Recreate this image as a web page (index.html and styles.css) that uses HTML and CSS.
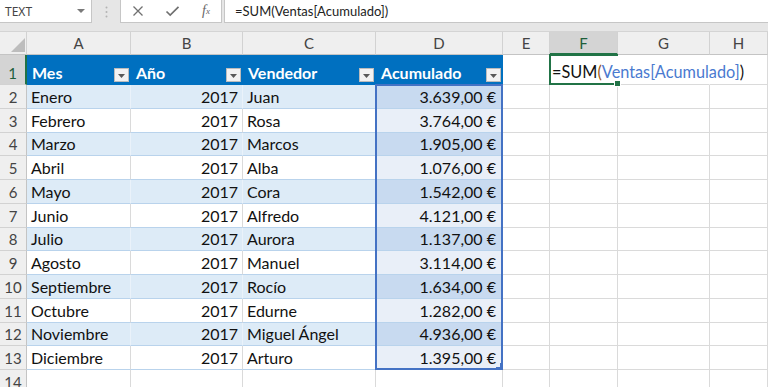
FILE: index.html
```html
<!DOCTYPE html>
<html lang="es">
<head>
    <meta charset="UTF-8">
    <meta name="viewport" content="width=device-width, initial-scale=1.0">
    <title>Ventas - Excel</title>
    <link rel="stylesheet" href="styles.css">
</head>
<body>
    <div class="formula-bar">
        <div class="name-box">
            <span>TEXT</span>
            <svg width="8" height="4" viewBox="0 0 8 4"><polygon points="0,0 8,0 4,4" fill="#7a7a7a"/></svg>
        </div>
        <div class="grip">
            <svg width="3" height="12" viewBox="0 0 3 12"><circle cx="1.5" cy="1.5" r="1" fill="#b3b3b3"/><circle cx="1.5" cy="6" r="1" fill="#b3b3b3"/><circle cx="1.5" cy="10.5" r="1" fill="#b3b3b3"/></svg>
        </div>
        <div class="fx-buttons">
            <span class="fx-btn"><svg width="12" height="12" viewBox="0 0 12 12"><path d="M1.5 1.5 L10.5 10.5 M10.5 1.5 L1.5 10.5" stroke="#707070" stroke-width="1.3" fill="none"/></svg></span>
            <span class="fx-btn"><svg width="15" height="12" viewBox="0 0 15 12"><path d="M1.5 6.5 L5.2 10 L13.5 1.8" stroke="#707070" stroke-width="1.7" fill="none"/></svg></span>
            <span class="fx-btn fx"><i>f</i><sub>x</sub></span>
        </div>
        <div class="formula-input">=SUM(Ventas[Acumulado])</div>
    </div>

    <div class="sheet">
        <!-- column headers -->
        <div class="corner"><svg width="27" height="23" viewBox="0 0 27 23"><polygon points="25,6 25,20 11,20" fill="#bdbdbd"/></svg></div>
        <div class="ch">A</div>
        <div class="ch">B</div>
        <div class="ch">C</div>
        <div class="ch">D</div>
        <div class="ch">E</div>
        <div class="ch ch-active">F</div>
        <div class="ch">G</div>
        <div class="ch">H</div>

        <!-- row 1: table header -->
        <div class="rh rh-active">1</div>
        <div class="c th"><span>Mes</span><span class="filter"><svg width="7" height="4" viewBox="0 0 7 4"><polygon points="0,0 7,0 3.5,4" fill="#595959"/></svg></span></div>
        <div class="c th"><span>Año</span><span class="filter"><svg width="7" height="4" viewBox="0 0 7 4"><polygon points="0,0 7,0 3.5,4" fill="#595959"/></svg></span></div>
        <div class="c th"><span>Vendedor</span><span class="filter"><svg width="7" height="4" viewBox="0 0 7 4"><polygon points="0,0 7,0 3.5,4" fill="#595959"/></svg></span></div>
        <div class="c th"><span>Acumulado</span><span class="filter"><svg width="7" height="4" viewBox="0 0 7 4"><polygon points="0,0 7,0 3.5,4" fill="#595959"/></svg></span></div>
        <div class="c"></div>
        <div class="c active-cell"><span>=SUM<span class="paren">(</span><span class="ref">Ventas[Acumulado]</span>)</span><span class="caret"></span></div>
        <div class="c no-right"></div>
        <div class="c"></div>

        <!-- data rows -->
        <div class="rh">2</div>
        <div class="c t band">Enero</div><div class="c t band num">2017</div><div class="c t band">Juan</div><div class="c t band num sel">3.639,00 €</div>
        <div class="c"></div><div class="c"></div><div class="c"></div><div class="c"></div>

        <div class="rh">3</div>
        <div class="c t">Febrero</div><div class="c t num">2017</div><div class="c t">Rosa</div><div class="c t num sel">3.764,00 €</div>
        <div class="c"></div><div class="c"></div><div class="c"></div><div class="c"></div>

        <div class="rh">4</div>
        <div class="c t band">Marzo</div><div class="c t band num">2017</div><div class="c t band">Marcos</div><div class="c t band num sel">1.905,00 €</div>
        <div class="c"></div><div class="c"></div><div class="c"></div><div class="c"></div>

        <div class="rh">5</div>
        <div class="c t">Abril</div><div class="c t num">2017</div><div class="c t">Alba</div><div class="c t num sel">1.076,00 €</div>
        <div class="c"></div><div class="c"></div><div class="c"></div><div class="c"></div>

        <div class="rh">6</div>
        <div class="c t band">Mayo</div><div class="c t band num">2017</div><div class="c t band">Cora</div><div class="c t band num sel">1.542,00 €</div>
        <div class="c"></div><div class="c"></div><div class="c"></div><div class="c"></div>

        <div class="rh">7</div>
        <div class="c t">Junio</div><div class="c t num">2017</div><div class="c t">Alfredo</div><div class="c t num sel">4.121,00 €</div>
        <div class="c"></div><div class="c"></div><div class="c"></div><div class="c"></div>

        <div class="rh">8</div>
        <div class="c t band">Julio</div><div class="c t band num">2017</div><div class="c t band">Aurora</div><div class="c t band num sel">1.137,00 €</div>
        <div class="c"></div><div class="c"></div><div class="c"></div><div class="c"></div>

        <div class="rh">9</div>
        <div class="c t">Agosto</div><div class="c t num">2017</div><div class="c t">Manuel</div><div class="c t num sel">3.114,00 €</div>
        <div class="c"></div><div class="c"></div><div class="c"></div><div class="c"></div>

        <div class="rh">10</div>
        <div class="c t band">Septiembre</div><div class="c t band num">2017</div><div class="c t band">Rocío</div><div class="c t band num sel">1.634,00 €</div>
        <div class="c"></div><div class="c"></div><div class="c"></div><div class="c"></div>

        <div class="rh">11</div>
        <div class="c t">Octubre</div><div class="c t num">2017</div><div class="c t">Edurne</div><div class="c t num sel">1.282,00 €</div>
        <div class="c"></div><div class="c"></div><div class="c"></div><div class="c"></div>

        <div class="rh">12</div>
        <div class="c t band">Noviembre</div><div class="c t band num">2017</div><div class="c t band">Miguel Ángel</div><div class="c t band num sel">4.936,00 €</div>
        <div class="c"></div><div class="c"></div><div class="c"></div><div class="c"></div>

        <div class="rh">13</div>
        <div class="c t">Diciembre</div><div class="c t num">2017</div><div class="c t">Arturo</div><div class="c t num sel">1.395,00 €</div>
        <div class="c"></div><div class="c"></div><div class="c"></div><div class="c"></div>

        <div class="rh">14</div>
        <div class="c"></div><div class="c"></div><div class="c"></div><div class="c"></div>
        <div class="c"></div><div class="c"></div><div class="c"></div><div class="c"></div>

        <!-- highlighted reference Ventas[Acumulado], drawn over D2:D13 -->
        <div class="ref-range"><span class="ref-handle"></span></div>
    </div>
</body>
</html>
```

FILE: styles.css
```css
:root {
    --grid-line: #dadada;
    --head-bg: #efefef;
    --head-line: #d2d2d2;
    --table-blue: #0070c0;
    --band: #ddebf7;
    --band-line: #b9d3ec;
    --excel-green: #217346;
    --ref-blue: #4472c4;
}

body {
    margin: 0;
    width: 768px;
    height: 387px;
    overflow: hidden;
    background: #ffffff;
    font-family: Lato, "Open Sans", sans-serif;
    color: #111;
}

/* formula bar */
.formula-bar {
    display: flex;
    align-items: flex-start;
    height: 32px;
    box-sizing: border-box;
    background: #e6e6e6;
    border-bottom: 1px solid #d4d4d4;
}

.name-box {
    width: 92px;
    height: 23px;
    box-sizing: border-box;
    display: flex;
    align-items: center;
    justify-content: space-between;
    padding: 0 6px 0 5px;
    background: #fff;
    border: 1px solid #c6c6c6;
    border-left: none;
    border-top: none;
    font-family: "Noto Sans", sans-serif;
    font-size: 12px;
    color: #444;
}

.grip {
    width: 28px;
    height: 23px;
    display: flex;
    align-items: center;
    justify-content: center;
}

.fx-buttons {
    width: 102px;
    height: 23px;
    box-sizing: border-box;
    display: grid;
    grid-template-columns: 34px 34px 34px;
    align-items: center;
    justify-items: center;
    background: #fff;
    border: 1px solid #c6c6c6;
    border-top: none;
}

.fx-btn {
    display: flex;
    align-items: center;
}

.fx {
    font-family: "Liberation Serif", serif;
    font-size: 14px;
    color: #666;
}

.fx sub {
    font-size: 9px;
    font-style: italic;
    vertical-align: -1px;
}

.formula-input {
    flex: 1;
    height: 23px;
    box-sizing: border-box;
    margin-left: 2px;
    padding-left: 10px;
    background: #fff;
    border: 1px solid #c6c6c6;
    border-top: none;
    border-right: none;
    font-size: 13px;
    line-height: 22px;
    color: #222;
}

/* sheet grid */
.sheet {
    position: relative;
    display: grid;
    grid-template-columns: 27px 104px 112px 133px 127px 47px 68px 92px 1fr;
    grid-template-rows: 23px 30px repeat(13, 23.75px);
    font-size: 16px;
}

.corner,
.ch,
.rh,
.c {
    box-sizing: border-box;
    min-width: 0;
}

.corner {
    background: var(--head-bg);
    border-right: 1px solid var(--head-line);
    border-bottom: 1px solid #c4c4c4;
}

.corner svg {
    display: block;
}

.ch {
    display: flex;
    align-items: center;
    justify-content: center;
    background: var(--head-bg);
    border-right: 1px solid var(--head-line);
    border-bottom: 1px solid #c4c4c4;
    color: #444;
    font-size: 15px;
}

.ch-active {
    background: #d4d4d4;
    color: #1e5e3b;
    border-bottom: 2px solid var(--excel-green);
}

.rh {
    display: flex;
    align-items: flex-end;
    justify-content: center;
    padding-bottom: 1px;
    line-height: 20px;
    background: var(--head-bg);
    border-right: 1px solid #c4c4c4;
    border-bottom: 1px solid var(--head-line);
    color: #444;
    font-size: 15px;
}

.rh-active {
    background: #d4d4d4;
    color: #1e5e3b;
    border-right: 2px solid var(--excel-green);
}

.c {
    display: flex;
    align-items: flex-end;
    padding: 0 4px 1px 4px;
    line-height: 20px;
    white-space: nowrap;
    border-right: 1px solid var(--grid-line);
    border-bottom: 1px solid var(--grid-line);
}

.no-right {
    border-right-color: transparent;
}

/* table Ventas */
.th {
    justify-content: space-between;
    padding: 0 1px 2px 5px;
    background: var(--table-blue);
    border-color: var(--table-blue);
    color: #fff;
    font-weight: bold;
}

.th > span:first-child {
    line-height: 20px;
    margin-bottom: -1px;
}

.filter {
    width: 15px;
    height: 14px;
    box-sizing: border-box;
    display: flex;
    align-items: center;
    justify-content: center;
    padding-top: 2px;
    background: #f2f2f2;
    border: 1px solid #bcbcbc;
}

.filter svg {
    display: block;
}

.t {
    border-bottom-color: var(--band-line);
}

.band {
    background: var(--band);
    border-right-color: #eaf2fa;
}

.num {
    justify-content: flex-end;
    padding-right: 4px;
}

.sel {
    background: #e9eff8;
    padding-right: 6px;
}

.band.sel {
    background: #c8daf0;
}

/* active cell being edited */
.active-cell {
    position: relative;
    overflow: visible;
    padding: 0 0 1px 1px;
    margin: -1px 0 0 -1px;
    border: 2px solid var(--excel-green);
    border-right: none;
    font-size: 16.3px;
}

.active-cell::after {
    content: "";
    position: absolute;
    right: -3px;
    bottom: -4px;
    width: 5px;
    height: 5px;
    background: var(--excel-green);
    border: 1px solid #fff;
}

.paren {
    color: #9c5a12;
}

.ref {
    color: #4a7ad0;
}

.caret {
    display: inline-block;
    width: 1px;
    height: 19px;
    margin-left: 2px;
    margin-bottom: 1px;
    background: #111;
}

/* overlay on the grid area D2:D13 (absolute so it stays out of auto-placement) */
.ref-range {
    position: absolute;
    grid-column: 5 / 6;
    grid-row: 3 / 15;
    top: -1px;
    left: -1px;
    right: 0;
    bottom: 0;
    border: 2px solid var(--ref-blue);
    pointer-events: none;
}

.ref-handle {
    position: absolute;
    right: 0;
    bottom: 0;
    width: 4px;
    height: 4px;
    border-right: 1px solid var(--ref-blue);
    border-bottom: 1px solid var(--ref-blue);
}
```
